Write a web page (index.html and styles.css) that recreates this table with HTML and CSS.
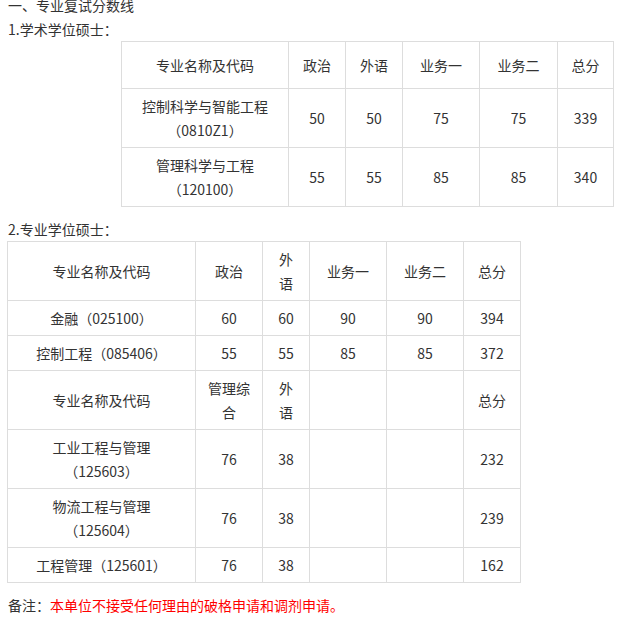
FILE: index.html
```html
<!DOCTYPE html>
<html lang="zh-CN">
<head>
<meta charset="utf-8">
<title>专业复试分数线</title>
<link rel="stylesheet" href="styles.css">
</head>
<body>
<div class="article">
  <p class="line first">一、专业复试分数线</p>
  <p class="line">1.学术学位硕士：</p>
  <table class="score t1">
    <colgroup>
      <col class="c167"><col class="c57"><col class="c57"><col class="c77"><col class="c78"><col class="c56">
    </colgroup>
    <tr class="head1">
      <td>专业名称及代码</td><td>政治</td><td>外语</td><td>业务一</td><td>业务二</td><td>总分</td>
    </tr>
    <tr>
      <td>控制科学与智能工程<br>（0810Z1）</td><td>50</td><td>50</td><td>75</td><td>75</td><td>339</td>
    </tr>
    <tr>
      <td>管理科学与工程<br>（120100）</td><td>55</td><td>55</td><td>85</td><td>85</td><td>340</td>
    </tr>
  </table>
  <p class="line gap">2.专业学位硕士：</p>
  <table class="score t2">
    <colgroup>
      <col class="c188"><col class="c67"><col class="c47"><col class="c77"><col class="c77"><col class="c57">
    </colgroup>
    <tr>
      <td>专业名称及代码</td><td>政治</td><td>外<br>语</td><td>业务一</td><td>业务二</td><td>总分</td>
    </tr>
    <tr>
      <td>金融（025100）</td><td>60</td><td>60</td><td>90</td><td>90</td><td>394</td>
    </tr>
    <tr>
      <td>控制工程（085406）</td><td>55</td><td>55</td><td>85</td><td>85</td><td>372</td>
    </tr>
    <tr>
      <td>专业名称及代码</td><td>管理综<br>合</td><td>外<br>语</td><td></td><td></td><td>总分</td>
    </tr>
    <tr>
      <td>工业工程与管理<br>（125603）</td><td>76</td><td>38</td><td></td><td></td><td>232</td>
    </tr>
    <tr>
      <td>物流工程与管理<br>（125604）</td><td>76</td><td>38</td><td></td><td></td><td>239</td>
    </tr>
    <tr>
      <td>工程管理（125601）</td><td>76</td><td>38</td><td></td><td></td><td>162</td>
    </tr>
  </table>
  <p class="line gap">备注：<span class="red">本单位不接受任何理由的破格申请和调剂申请。</span></p>
</div>
</body>
</html>
```

FILE: styles.css
```css
html, body {
  margin: 0;
  padding: 0;
  background: #fff;
}
body {
  font-family: "Noto Sans CJK SC", "Microsoft YaHei", sans-serif;
  font-size: 14px;
  line-height: 24px;
  color: #333;
}
.article {
  padding: 0 8px;
}
.line {
  margin: 0;
}
.line.first {
  margin-top: -7px;
}
.line.gap {
  margin-top: 10px;
}
.red {
  color: #ff0000;
}
.score {
  border-collapse: collapse;
  table-layout: fixed;
}
.score td {
  border: 1px solid #ddd;
  padding: 5px 10px;
  text-align: center;
  vertical-align: middle;
  word-break: break-all;
}
.t1 {
  margin-left: 113px;
  width: 493px;
}
.t2 {
  margin-left: -1px;
  width: 514px;
}
.head1 td {
  height: 36px;
}
.c167 { width: 167px; }
.c57 { width: 57px; }
.c77 { width: 77px; }
.c78 { width: 78px; }
.c56 { width: 56px; }
.c188 { width: 188px; }
.c67 { width: 67px; }
.c47 { width: 47px; }
```
